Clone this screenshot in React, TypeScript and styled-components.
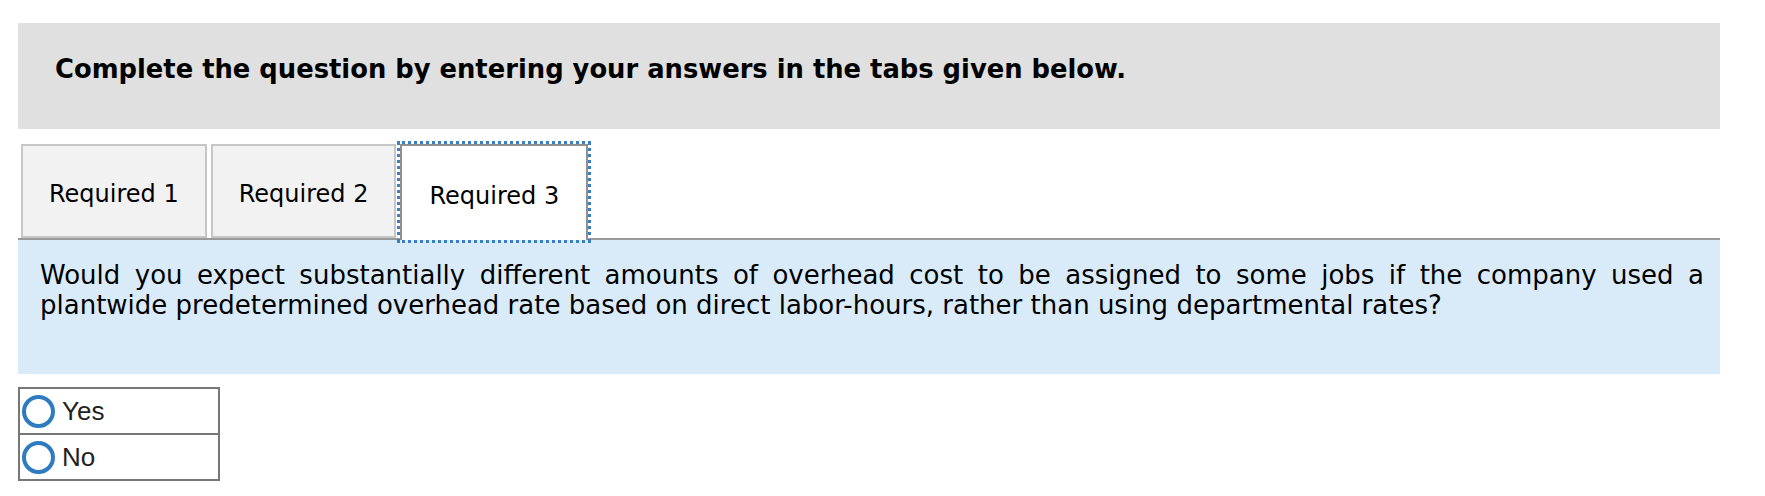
import React from 'react';
import styled, { createGlobalStyle } from 'styled-components';

const Global = createGlobalStyle`
  html, body { margin: 0; padding: 0; background: #ffffff; }
  body { font-family: "DejaVu Sans", Verdana, sans-serif; color: #000; }
`;

const Page = styled.div`
  width: 1702px;
  margin-left: 18px;
  padding-top: 23px;
`;

const Banner = styled.div`
  height: 106px;
  box-sizing: border-box;
  background: #e0e0e0;
  display: flex;
  align-items: center;
  padding: 0 0 14px 37px;
  font-size: 25.8px;
  font-weight: bold;
`;

const TabBar = styled.div`
  margin-top: 15px;
  display: flex;
  gap: 4px;
  padding-left: 3px;
  border-bottom: 2px solid #9a9a9a;
`;

const Tab = styled.div<{ $active?: boolean }>`
  box-sizing: border-box;
  padding: 5px ${(p) => (p.$active ? '27px' : '26px')} 0;
  display: flex;
  align-items: center;
  font-size: 24px;
  background: ${(p) => (p.$active ? '#ffffff' : '#f2f2f2')};
  border: 2px solid ${(p) => (p.$active ? '#8f8f8f' : '#c6c6c6')};
  border-bottom: ${(p) => (p.$active ? 'none' : '2px solid #c6c6c6')};
  margin-bottom: ${(p) => (p.$active ? '-2px' : '0')};
  height: ${(p) => (p.$active ? '96px' : '94px')};
  outline: ${(p) => (p.$active ? '3px dotted #3b80c6' : 'none')};
  outline-offset: 0;
  position: relative;
`;

const Question = styled.div`
  background: #d9ebf9;
  box-sizing: border-box;
  height: 134px;
  padding: 20px 16px 0 22px;
  font-size: 26px;
  line-height: 30px;
  text-align: justify;
`;

const Choices = styled.div`
  margin-top: 13px;
  width: 202px;
  box-sizing: border-box;
  border: 2px solid #777777;
  font-family: "Liberation Sans", Arial, sans-serif;
`;

const Choice = styled.label<{ $last?: boolean }>`
  height: 44px;
  display: flex;
  align-items: center;
  gap: 7px;
  padding-left: 2px;
  font-size: 26px;
  color: #222;
  border-bottom: ${(p) => (p.$last ? 'none' : '2px solid #777777')};
`;

const Circle = styled.span`
  width: 33px;
  height: 33px;
  box-sizing: border-box;
  border-radius: 50%;
  border: 4px solid #2f7bbf;
  background: #fff;
  flex: none;
`;

export default function App() {
  return (
    <>
      <Global />
      <Page>
        <Banner>Complete the question by entering your answers in the tabs given below.</Banner>
        <TabBar>
          <Tab>Required 1</Tab>
          <Tab>Required 2</Tab>
          <Tab $active>Required 3</Tab>
        </TabBar>
        <Question>
          Would you expect substantially different amounts of overhead cost to be assigned to some jobs if the company used a plantwide predetermined overhead rate based on direct labor-hours, rather than using departmental rates?
        </Question>
        <Choices>
          <Choice>
            <Circle />
            Yes
          </Choice>
          <Choice $last>
            <Circle />
            No
          </Choice>
        </Choices>
      </Page>
    </>
  );
}
